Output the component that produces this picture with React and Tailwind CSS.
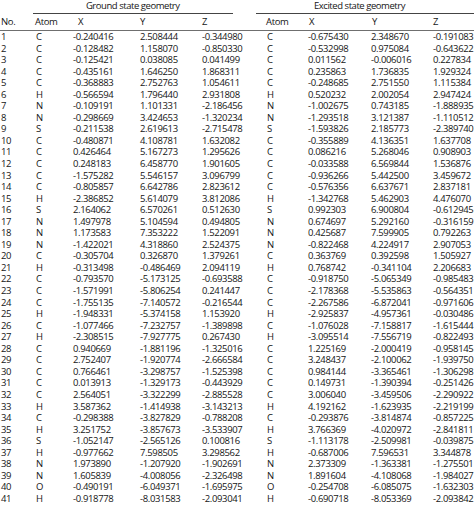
import React from "react"

const ground = [
  ["1", "C", "-0.240416", "2.508444", "-0.344980"],
  ["2", "C", "-0.128482", "1.158070", "-0.850330"],
  ["3", "C", "-0.125421", "0.038085", "0.041499"],
  ["4", "C", "-0.435161", "1.646250", "1.868311"],
  ["5", "C", "-0.368883", "2.752763", "1.054611"],
  ["6", "H", "-0.566594", "1.796440", "2.931808"],
  ["7", "N", "-0.109191", "1.101331", "-2.186456"],
  ["8", "N", "-0.298669", "3.424653", "-1.320234"],
  ["9", "S", "-0.211538", "2.619613", "-2.715478"],
  ["10", "C", "-0.480871", "4.108781", "1.632082"],
  ["11", "C", "0.426464", "5.167273", "1.295626"],
  ["12", "C", "0.248183", "6.458770", "1.901605"],
  ["13", "C", "-1.575282", "5.546157", "3.096799"],
  ["14", "C", "-0.805857", "6.642786", "2.823612"],
  ["15", "H", "-2.386852", "5.614079", "3.812086"],
  ["16", "S", "2.164062", "6.570261", "0.512630"],
  ["17", "N", "1.497978", "5.104594", "0.494805"],
  ["18", "N", "1.173583", "7.353222", "1.522091"],
  ["19", "N", "-1.422021", "4.318860", "2.524375"],
  ["20", "C", "-0.305704", "0.326870", "1.379261"],
  ["21", "H", "-0.313498", "-0.486469", "2.094119"],
  ["22", "C", "-0.793570", "-5.173125", "-0.693588"],
  ["23", "C", "-1.571991", "-5.806254", "0.241447"],
  ["24", "C", "-1.755135", "-7.140572", "-0.216544"],
  ["25", "H", "-1.948331", "-5.374158", "1.153920"],
  ["26", "C", "-1.077466", "-7.232757", "-1.389898"],
  ["27", "H", "-2.308515", "-7.927775", "0.267430"],
  ["28", "C", "0.940669", "-1.881196", "-1.325016"],
  ["29", "C", "2.752407", "-1.920774", "-2.666584"],
  ["30", "C", "0.766461", "-3.298757", "-1.525398"],
  ["31", "C", "0.013913", "-1.329173", "-0.443929"],
  ["32", "C", "2.564051", "-3.322299", "-2.885528"],
  ["33", "H", "3.587362", "-1.414938", "-3.143213"],
  ["34", "C", "-0.298388", "-3.827829", "-0.788208"],
  ["35", "H", "3.251752", "-3.857673", "-3.533907"],
  ["36", "S", "-1.052147", "-2.565126", "0.100816"],
  ["37", "H", "-0.977662", "7.598505", "3.298562"],
  ["38", "N", "1.973890", "-1.207920", "-1.902691"],
  ["39", "N", "1.605839", "-4.008056", "-2.326498"],
  ["40", "O", "-0.490191", "-6.049371", "-1.695975"],
  ["41", "H", "-0.918778", "-8.031583", "-2.093041"],
]

const excited = [
  ["C", "-0.675430", "2.348670", "-0.191083"],
  ["C", "-0.532998", "0.975084", "-0.643622"],
  ["C", "0.011562", "-0.006016", "0.227834"],
  ["C", "0.235863", "1.736835", "1.929324"],
  ["C", "-0.248685", "2.751550", "1.115384"],
  ["H", "0.520232", "2.002054", "2.947424"],
  ["N", "-1.002675", "0.743185", "-1.888935"],
  ["N", "-1.293518", "3.121387", "-1.110512"],
  ["S", "-1.593826", "2.185773", "-2.389740"],
  ["C", "-0.355889", "4.136351", "1.637708"],
  ["C", "0.086216", "5.268046", "0.908903"],
  ["C", "-0.033588", "6.569844", "1.536876"],
  ["C", "-0.936266", "5.442500", "3.459672"],
  ["C", "-0.576356", "6.637671", "2.837181"],
  ["H", "-1.342768", "5.462903", "4.476070"],
  ["S", "0.992303", "6.900804", "-0.612945"],
  ["N", "0.674697", "5.292160", "-0.316159"],
  ["N", "0.425687", "7.599905", "0.792263"],
  ["N", "-0.822468", "4.224917", "2.907053"],
  ["C", "0.363769", "0.392598", "1.505927"],
  ["H", "0.768742", "-0.341104", "2.206683"],
  ["C", "-0.918750", "-5.065349", "-0.985483"],
  ["C", "-2.178368", "-5.535863", "-0.564351"],
  ["C", "-2.267586", "-6.872041", "-0.971606"],
  ["H", "-2.925837", "-4.957361", "-0.030486"],
  ["C", "-1.076028", "-7.158817", "-1.615444"],
  ["H", "-3.095514", "-7.556719", "-0.822493"],
  ["C", "1.225169", "-2.000419", "-0.958145"],
  ["C", "3.248437", "-2.100062", "-1.939750"],
  ["C", "0.984144", "-3.365461", "-1.306298"],
  ["C", "0.149731", "-1.390394", "-0.251426"],
  ["C", "3.006040", "-3.459506", "-2.290922"],
  ["H", "4.192162", "-1.623935", "-2.219199"],
  ["C", "-0.293876", "-3.814874", "-0.857225"],
  ["H", "3.766369", "-4.020972", "-2.841811"],
  ["S", "-1.113178", "-2.509981", "-0.039875"],
  ["H", "-0.687006", "7.596531", "3.344878"],
  ["N", "2.373309", "-1.363381", "-1.275501"],
  ["N", "1.891604", "-4.108068", "-1.984027"],
  ["O", "-0.254708", "-6.085075", "-1.632303"],
  ["H", "-0.690718", "-8.053369", "-2.093842"],
]

const cols = "grid grid-cols-[35px_38px_67px_62px_64px_42px_63px_62px_90px]"

export default function App() {
  return (
    <div
      className="w-[474px] h-[509px] overflow-hidden bg-white text-[#151515] text-[9.5px] tracking-[-0.35px] whitespace-nowrap"
      style={{ fontFamily: '"Open Sans", "Noto Sans", sans-serif' }}
    >
      {/* group headings */}
      <div className="flex pl-[33px] gap-[23px]">
        <div className="w-[210px] h-[14px] leading-[12px] text-center border-b border-[#444] tracking-[-0.45px]">
          Ground state geometry
        </div>
        <div className="w-[230px] h-[14px] leading-[12px] border-b border-[#444] tracking-[-0.45px]">
          <div className="w-[208px] text-center">Excited state geometry</div>
        </div>
      </div>

      {/* column headings */}
      <div className={`${cols} h-[17px] leading-[16px] border-b-[1.5px] border-[#6f6f6f]`}>
        <div className="pl-[1px]">No.</div>
        <div>Atom</div>
        <div className="pl-[5px]">X</div>
        <div>Y</div>
        <div>Z</div>
        <div>Atom</div>
        <div className="pl-[1px]">X</div>
        <div className="pl-[1px]">Y</div>
        <div>Z</div>
      </div>

      {/* data rows */}
      <div>
        {ground.map((g, i) => {
          const e = excited[i]
          return (
            <div key={g[0]} className={`${cols} h-[11.56px] leading-[11.56px]`}>
              <div className="pl-[1px]">{g[0]}</div>
              <div className="pl-[1px]">{g[1]}</div>
              <div>{g[2]}</div>
              <div>{g[3]}</div>
              <div>{g[4]}</div>
              <div className="pl-[1px]">{e[0]}</div>
              <div>{e[1]}</div>
              <div>{e[2]}</div>
              <div>{e[3]}</div>
            </div>
          )
        })}
      </div>
    </div>
  )
}
